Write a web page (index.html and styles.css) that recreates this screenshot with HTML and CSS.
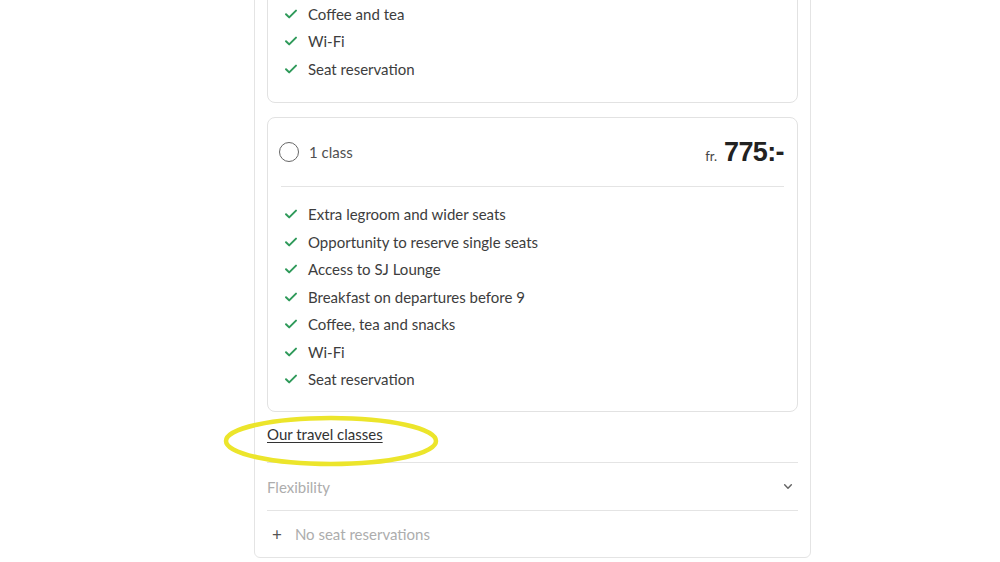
FILE: index.html
```html
<!DOCTYPE html>
<html lang="en">
<head>
<meta charset="utf-8">
<title>Travel classes</title>
<link rel="stylesheet" href="styles.css">
</head>
<body>
<div class="page">
  <section class="panel">
    <div class="card card-first">
      <ul class="features">
        <li><svg class="check" viewBox="0 0 14 14"><path d="M2 7.2l3.2 3.2L12 3.6"/></svg>Coffee and tea</li>
        <li><svg class="check" viewBox="0 0 14 14"><path d="M2 7.2l3.2 3.2L12 3.6"/></svg>Wi-Fi</li>
        <li><svg class="check" viewBox="0 0 14 14"><path d="M2 7.2l3.2 3.2L12 3.6"/></svg>Seat reservation</li>
      </ul>
    </div>
    <div class="card">
      <div class="card-head">
        <span class="radio"></span>
        <span class="class-name">1 class</span>
        <span class="price"><span class="cur">fr.</span><span class="amount">775:-</span></span>
      </div>
      <div class="divider"></div>
      <ul class="features">
        <li><svg class="check" viewBox="0 0 14 14"><path d="M2 7.2l3.2 3.2L12 3.6"/></svg>Extra legroom and wider seats</li>
        <li><svg class="check" viewBox="0 0 14 14"><path d="M2 7.2l3.2 3.2L12 3.6"/></svg>Opportunity to reserve single seats</li>
        <li><svg class="check" viewBox="0 0 14 14"><path d="M2 7.2l3.2 3.2L12 3.6"/></svg>Access to SJ Lounge</li>
        <li><svg class="check" viewBox="0 0 14 14"><path d="M2 7.2l3.2 3.2L12 3.6"/></svg>Breakfast on departures before 9</li>
        <li><svg class="check" viewBox="0 0 14 14"><path d="M2 7.2l3.2 3.2L12 3.6"/></svg>Coffee, tea and snacks</li>
        <li><svg class="check" viewBox="0 0 14 14"><path d="M2 7.2l3.2 3.2L12 3.6"/></svg>Wi-Fi</li>
        <li><svg class="check" viewBox="0 0 14 14"><path d="M2 7.2l3.2 3.2L12 3.6"/></svg>Seat reservation</li>
      </ul>
    </div>
    <div class="link-row">
      <a class="classes-link" href="#">Our travel classes</a>
      <svg class="highlight" viewBox="0 0 218 54" width="218" height="54"><ellipse cx="108" cy="26" rx="105" ry="23"/></svg>
    </div>
    <div class="row flex-row">
      <span>Flexibility</span>
      <svg class="chevron" viewBox="0 0 12 8" width="10" height="7"><path d="M2 2l4 4 4-4"/></svg>
    </div>
    <div class="row seat-row">
      <span class="plus">+</span>
      <span>No seat reservations</span>
    </div>
  </section>
</div>
</body>
</html>
```
FILE: styles.css
```css
* { box-sizing: border-box; }
html, body { margin: 0; padding: 0; background: #fff; }
body {
  font-family: Lato, "Open Sans", "Liberation Sans", sans-serif;
  color: #3a3a3a;
  font-size: 15px;
  overflow: hidden;
  height: 562px;
}
.page {
  display: flex;
  padding-left: 254px;
}
.panel {
  width: 557px;
  margin-top: -39px;
  border: 1px solid #e4e4e4;
  border-radius: 6px;
  padding: 13px 12px 0;
}
.card {
  border: 1px solid #e2e2e2;
  border-radius: 8px;
  padding: 0 13px 18px;
  margin-top: 14px;
}
.card-first {
  margin-top: 0;
  padding-top: 24px;
  padding-bottom: 19px;
}
.features {
  list-style: none;
  margin: 0;
  padding: 0 0 0 3px;
}
.card .divider + .features { padding-top: 14px; }
.features li {
  display: flex;
  align-items: center;
  height: 27.5px;
  font-size: 15px;
  color: #3d3d3d;
}
.check {
  width: 14px;
  height: 14px;
  margin-right: 10px;
  fill: none;
  stroke: #2f9a5a;
  stroke-width: 2;
  stroke-linecap: round;
  stroke-linejoin: round;
}
.card-head {
  display: flex;
  align-items: center;
  height: 68px;
}
.radio {
  width: 20px;
  height: 20px;
  border: 1.5px solid #666;
  border-radius: 50%;
  margin-left: -2px;
  margin-right: 10px;
}
.class-name { font-size: 15px; color: #505050; }
.price {
  margin-left: auto;
  display: flex;
  align-items: baseline;
  margin-top: 2px;
}
.cur {
  font-size: 13px;
  color: #444;
  margin-right: 7px;
}
.amount {
  font-family: "Liberation Sans", Arial, sans-serif;
  font-weight: bold;
  font-size: 27px;
  letter-spacing: -0.6px;
  color: #222;
}
.divider {
  height: 1px;
  background: #e4e4e4;
}
.link-row {
  position: relative;
  padding: 12px 0 18px;
  border-bottom: 1px solid #e4e4e4;
  line-height: 20px;
}
.classes-link {
  color: #333;
  font-size: 15px;
  text-decoration: underline;
  text-underline-offset: 2px;
}
.highlight {
  position: absolute;
  left: -44px;
  top: 3px;
  fill: none;
  stroke: #ece52b;
  stroke-width: 4.5;
  pointer-events: none;
}
.row {
  display: flex;
  align-items: center;
  color: #adadad;
  font-size: 15px;
}
.flex-row {
  height: 48px;
  border-bottom: 1px solid #e4e4e4;
  justify-content: space-between;
}
.chevron {
  margin-right: 5px;
  fill: none;
  stroke: #666;
  stroke-width: 1.8;
  stroke-linecap: round;
  stroke-linejoin: round;
}
.seat-row { height: 46px; }
.plus {
  color: #555;
  font-size: 17px;
  margin-left: 5px;
  margin-right: 13px;
}
```
